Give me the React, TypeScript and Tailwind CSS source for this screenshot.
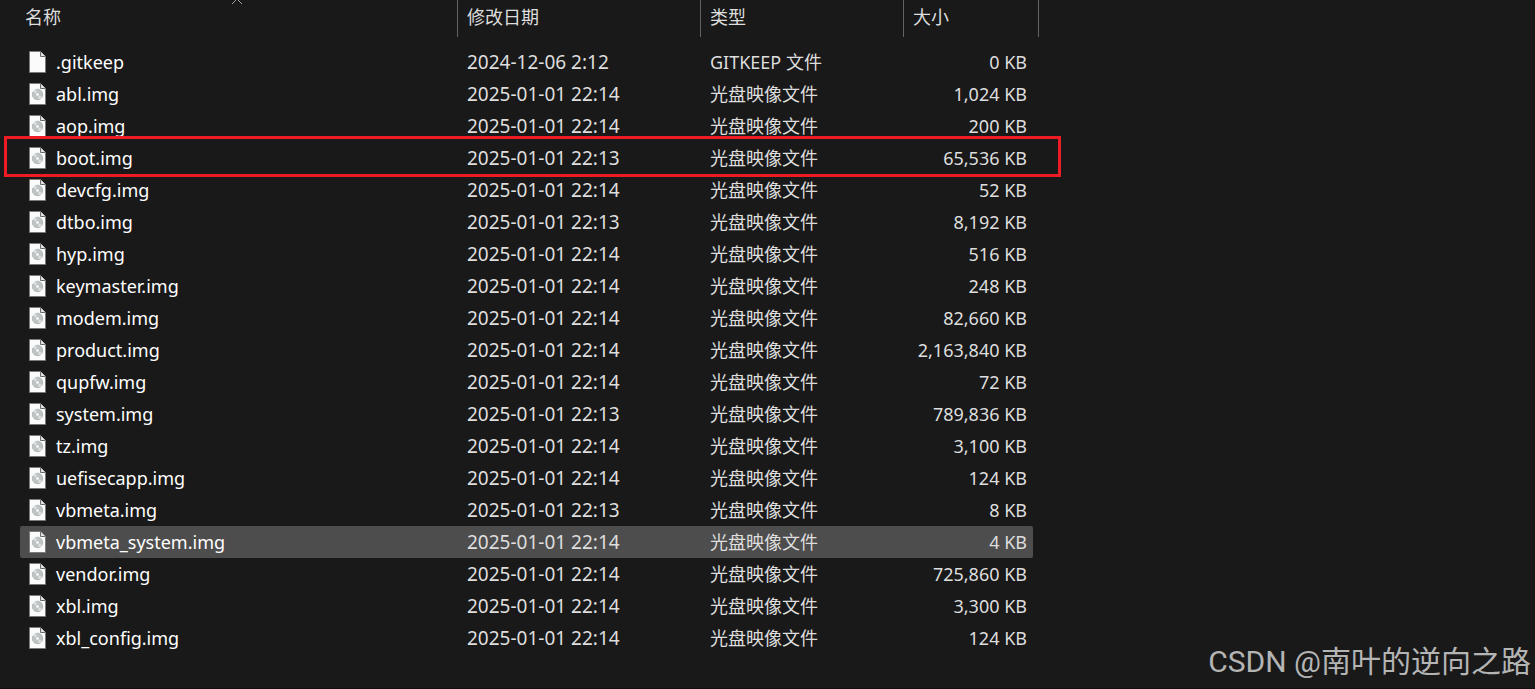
type FileEntry = {
  name: string;
  date: string;
  type: string;
  size: string;
  marked?: boolean;
  hovered?: boolean;
};

const files: FileEntry[] = [
  { name: ".gitkeep", date: "2024-12-06 2:12", type: "GITKEEP 文件", size: "0 KB" },
  { name: "abl.img", date: "2025-01-01 22:14", type: "光盘映像文件", size: "1,024 KB" },
  { name: "aop.img", date: "2025-01-01 22:14", type: "光盘映像文件", size: "200 KB" },
  { name: "boot.img", date: "2025-01-01 22:13", type: "光盘映像文件", size: "65,536 KB", marked: true },
  { name: "devcfg.img", date: "2025-01-01 22:14", type: "光盘映像文件", size: "52 KB" },
  { name: "dtbo.img", date: "2025-01-01 22:13", type: "光盘映像文件", size: "8,192 KB" },
  { name: "hyp.img", date: "2025-01-01 22:14", type: "光盘映像文件", size: "516 KB" },
  { name: "keymaster.img", date: "2025-01-01 22:14", type: "光盘映像文件", size: "248 KB" },
  { name: "modem.img", date: "2025-01-01 22:14", type: "光盘映像文件", size: "82,660 KB" },
  { name: "product.img", date: "2025-01-01 22:14", type: "光盘映像文件", size: "2,163,840 KB" },
  { name: "qupfw.img", date: "2025-01-01 22:14", type: "光盘映像文件", size: "72 KB" },
  { name: "system.img", date: "2025-01-01 22:13", type: "光盘映像文件", size: "789,836 KB" },
  { name: "tz.img", date: "2025-01-01 22:14", type: "光盘映像文件", size: "3,100 KB" },
  { name: "uefisecapp.img", date: "2025-01-01 22:14", type: "光盘映像文件", size: "124 KB" },
  { name: "vbmeta.img", date: "2025-01-01 22:13", type: "光盘映像文件", size: "8 KB" },
  { name: "vbmeta_system.img", date: "2025-01-01 22:14", type: "光盘映像文件", size: "4 KB", hovered: true },
  { name: "vendor.img", date: "2025-01-01 22:14", type: "光盘映像文件", size: "725,860 KB" },
  { name: "xbl.img", date: "2025-01-01 22:14", type: "光盘映像文件", size: "3,300 KB" },
  { name: "xbl_config.img", date: "2025-01-01 22:14", type: "光盘映像文件", size: "124 KB" },
];

function FileIcon({ disc }: { disc: boolean }) {
  return (
    <svg width="17" height="22" viewBox="0 0 17 22" className="shrink-0" aria-hidden="true">
      <path d="M.5.5h11l5 5v16H.5z" fill="#fbfbfb" stroke="#7b7b78" />
      <path d="M11.5.5v5h5" fill="#e4e4e4" stroke="#6c6c6a" />
      {disc && (
        <>
          <circle cx="8.5" cy="11.5" r="5.2" fill="#bfc5c5" stroke="#a3a9a9" strokeWidth=".7" />
          <path d="M8.5 11.5 4 8.8a5.2 5.2 0 0 1 3-2.3z" fill="#dde1e1" />
          <path d="m8.5 11.5 4.6 2.4a5.2 5.2 0 0 1-3 2.4z" fill="#dde1e1" />
          <circle cx="8.5" cy="11.5" r="2" fill="#e6e9e9" stroke="#a9aeae" strokeWidth=".5" />
          <circle cx="8.5" cy="11.5" r=".9" fill="#fff" />
        </>
      )}
    </svg>
  );
}

export default function App() {
  return (
    <div className="relative min-h-screen overflow-hidden border-b border-[#120c14] bg-[#191919] font-['Noto_Sans','Noto_Sans_CJK_SC',sans-serif] text-lg text-[#dedede]">
      <table className="ml-5 table-fixed border-separate border-spacing-0">
        <colgroup>
          <col className="w-[438px]" />
          <col className="w-[243px]" />
          <col className="w-[203px]" />
          <col className="w-[129px]" />
          <col className="w-1.5" />
        </colgroup>
        <thead>
          <tr className="h-[37px] text-left align-top">
            <th className="relative border-r border-[#636363] p-0 pl-[5px] font-normal leading-[34px]">
              名称
              <svg
                width="12"
                height="6"
                viewBox="0 0 12 6"
                className="absolute -top-px left-[211px]"
                fill="none"
                stroke="#a0a0a0"
                aria-hidden="true"
              >
                <path d="m1 5 5-5 5 5" />
              </svg>
            </th>
            <th className="border-r border-[#636363] p-0 pl-[9px] font-normal leading-[34px]">修改日期</th>
            <th className="border-r border-[#636363] p-0 pl-[9px] font-normal leading-[34px]">类型</th>
            <th colSpan={2} className="border-r border-[#636363] p-0 pl-[9px] font-normal leading-[34px]">
              大小
            </th>
          </tr>
        </thead>
        <tbody>
          <tr className="h-[9px]">
            <td colSpan={5} className="p-0" />
          </tr>
          {files.map((file) => (
            <tr key={file.name} className={file.hovered ? "[&>td]:bg-[#4d4d4d]" : ""}>
              <td className="relative rounded-l-xs p-0 pl-[9px] leading-8 text-white">
                <div className="flex h-8 items-center gap-2.5">
                  <FileIcon disc={file.name.endsWith(".img")} />
                  {file.name}
                </div>
                {file.marked && (
                  <span className="pointer-events-none absolute -top-1.5 -left-4 z-10 h-[41px] w-[1057px] border-3 border-[#ed1c24]" />
                )}
              </td>
              <td className="p-0 pl-[9px] text-[19px] leading-8">{file.date}</td>
              <td className="p-0 pl-[9px] leading-8">{file.type}</td>
              <td className="rounded-r-xs p-0 pr-1.5 text-right leading-8">{file.size}</td>
            </tr>
          ))}
        </tbody>
      </table>
      <div className="absolute right-1 bottom-1 font-[Roboto,'Noto_Sans_CJK_SC',sans-serif] text-[30px] leading-11 text-[#b4b4b4]">
        CSDN @南叶的逆向之路
      </div>
    </div>
  );
}
